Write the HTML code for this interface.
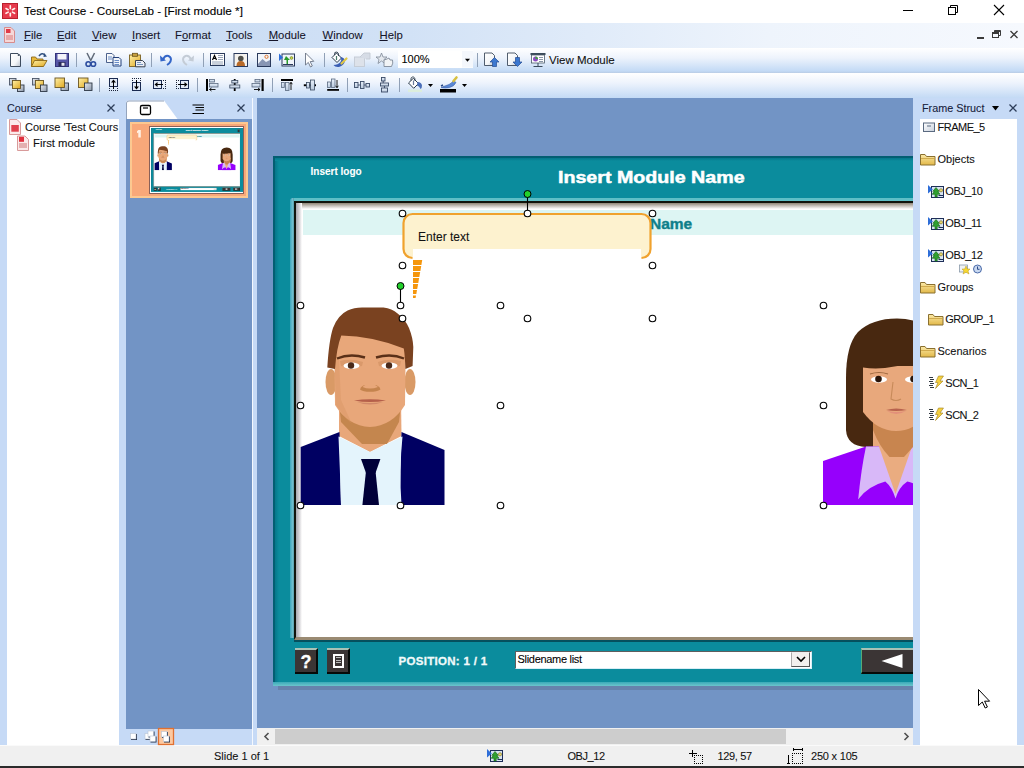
<!DOCTYPE html>
<html><head><meta charset="utf-8">
<style>
*{margin:0;padding:0;box-sizing:border-box}
html,body{width:1024px;height:768px;overflow:hidden;background:#C6DAF6;font-family:"Liberation Sans",sans-serif;font-size:12px;color:#000}
.a{position:absolute}
.t{position:absolute;white-space:nowrap;line-height:1;-webkit-text-stroke:0.08px currentColor}
u{text-decoration:underline;text-underline-offset:0.5px;text-decoration-thickness:1px}
</style></head><body>

<!-- title bar -->
<div class="a" style="left:0;top:0;width:1024px;height:23px;background:#fff"></div>
<div class="a" style="left:2px;top:3px;width:16px;height:16px;background:#E8424A"></div>
<div class="t" style="left:24px;top:5.3px;font-size:11.7px;color:#000;-webkit-text-stroke:0.12px #000">Test Course - CourseLab - [First module *]</div>

<!-- menu bar -->
<div class="a" style="left:0;top:23px;width:1024px;height:24.5px;background:linear-gradient(90deg,#C4D8F2 0%,#D2E2F6 40%,#EEF4FC 75%,#F6F9FE 100%)"></div>

<!-- toolbars -->
<div class="a" style="left:0;top:47.5px;width:1024px;height:25px;background:linear-gradient(180deg,#FFFFFF 0%,#EDF3FC 40%,#C3DAF5 92%,#B9CCE4 100%)"></div>
<div class="a" style="left:0;top:72.5px;width:1024px;height:25.5px;background:linear-gradient(180deg,#FFFFFF 0%,#EDF3FC 40%,#C3DAF5 100%)"></div>

<!-- left panel -->
<div class="t" style="left:7px;top:103.3px;font-size:10.8px;color:#15203a">Course</div>
<div class="a" style="left:7px;top:119px;width:112px;height:626px;background:#fff"></div>

<!-- thumbnail panel -->

<div class="a" style="left:126px;top:119px;width:126px;height:610px;background:#7294C5"></div>
<div class="a" style="left:252px;top:98px;width:1px;height:647px;background:#F4F8FE"></div>

<svg class="a" style="left:0;top:47px" width="620" height="51" viewBox="0 47 620 51">
<defs>
 <linearGradient id="gY" x1="0" y1="0" x2="1" y2="1"><stop offset="0" stop-color="#FFF0A8"/><stop offset="1" stop-color="#E0A820"/></linearGradient>
 <linearGradient id="gG" x1="0" y1="0" x2="1" y2="1"><stop offset="0" stop-color="#E8ECF2"/><stop offset="1" stop-color="#8A96A8"/></linearGradient>
 <linearGradient id="gDoc" x1="0" y1="0" x2="1" y2="1"><stop offset="0" stop-color="#FFFFFF"/><stop offset="0.6" stop-color="#F4F6F8"/><stop offset="1" stop-color="#B8C0CC"/></linearGradient>
 <linearGradient id="gB" x1="0" y1="0" x2="0" y2="1"><stop offset="0" stop-color="#E8F0FA"/><stop offset="1" stop-color="#B8C8DC"/></linearGradient>
</defs>
<!-- ===== toolbar 1 ===== -->
<!-- new -->
<path d="M10.5,53.5 L18,53.5 L20.5,56 L20.5,66.5 L10.5,66.5 Z" fill="url(#gDoc)" stroke="#3E4C5E" stroke-width="1"/>
<circle cx="18.6" cy="55" r="1" fill="#3E4C5E"/>
<!-- open -->
<path d="M31.5,57 L31.5,66.5 L43,66.5 L43,59 L37,59 L35.5,57 Z" fill="#E8B838" stroke="#8A6818" stroke-width="0.9"/>
<path d="M31.5,66.5 L34.5,60.5 L47,60.5 L43.5,66.5 Z" fill="url(#gY)" stroke="#8A6818" stroke-width="0.9"/>
<path d="M39,56 Q42,52 45,55" fill="none" stroke="#2E4E7E" stroke-width="1.6"/>
<path d="M44,53 L47,56.5 L43.5,57 Z" fill="#2E4E7E"/>
<!-- save -->
<rect x="55.5" y="53.5" width="13" height="13" fill="#5656A6" stroke="#34347C" stroke-width="1"/>
<rect x="57.5" y="54" width="9" height="5.5" fill="#F4F4FA"/>
<rect x="58.5" y="62" width="7" height="4.5" fill="#2A2A5A"/>
<rect x="61.5" y="62.8" width="3" height="3" fill="#E8E8F0"/>
<line x1="76.5" y1="53" x2="76.5" y2="67" stroke="#90A0B6" stroke-width="1"/>
<!-- cut -->
<path d="M87,53 L91,61 M94.5,53 L90.5,61" stroke="#606A78" stroke-width="1.5"/>
<circle cx="88.3" cy="64" r="2.3" fill="none" stroke="#2D4EA0" stroke-width="1.6"/>
<circle cx="93.3" cy="64" r="2.3" fill="none" stroke="#2D4EA0" stroke-width="1.6"/>
<!-- copy -->
<path d="M106.5,53.5 L112,53.5 L114,55.5 L114,62.5 L106.5,62.5 Z" fill="#F8FAFC" stroke="#3A5080" stroke-width="0.9"/>
<path d="M113,57.5 L119,57.5 L121,59.5 L121,66 L113,66 Z" fill="#F0F4FA" stroke="#23407A" stroke-width="1"/>
<path d="M108,57 H112 M108,59 H112 M114.5,60.5 H119 M114.5,62.5 H119 M114.5,64.5 H119" stroke="#5A80C0" stroke-width="0.9"/>
<!-- paste -->
<rect x="129.5" y="55" width="11" height="11.5" fill="url(#gY)" stroke="#7A6020" stroke-width="0.9"/>
<rect x="132.5" y="53.3" width="5" height="3" fill="#C8A040" stroke="#6A5218" stroke-width="0.8"/>
<path d="M135.5,60.5 L142.5,60.5 L145,63 L145,66.8 L135.5,66.8 Z" fill="#ECEEF4" stroke="#3A4250" stroke-width="1"/>
<path d="M137,62.5 H141 M137,64.5 H143" stroke="#5A80B0" stroke-width="0.8"/>
<line x1="151.5" y1="53" x2="151.5" y2="67" stroke="#90A0B6" stroke-width="1"/>
<!-- undo -->
<path d="M163,59.5 Q165,55 168.5,56 Q172,57.5 170.5,61.5 Q169.5,63.5 167,65" fill="none" stroke="#3466C8" stroke-width="2"/>
<path d="M160,55.5 L160.5,61.5 L166,60.5 Z" fill="#3466C8"/>
<!-- redo -->
<path d="M191,59.5 Q189,55 185.5,56 Q182,57.5 183.5,61.5 Q184.5,63.5 187,65" fill="none" stroke="#C4CCD6" stroke-width="2"/>
<path d="M194,55.5 L193.5,61.5 L188,60.5 Z" fill="#C4CCD6"/>
<line x1="203.5" y1="53" x2="203.5" y2="67" stroke="#90A0B6" stroke-width="1"/>
<!-- text box -->
<rect x="210.5" y="53.5" width="14" height="12" fill="#fff" stroke="#2A3A5C" stroke-width="1"/>
<path d="M212.5,60 L214.5,55.5 L216.5,60 M213.3,58.5 H215.7" fill="none" stroke="#000" stroke-width="1.2"/>
<path d="M218,55.5 H223 M218,57.5 H223 M218,59.5 H223 M212,62 H223 M212,64 H223" stroke="#7A8AA4" stroke-width="0.8"/>
<!-- person picture -->
<rect x="234" y="53.5" width="13.5" height="13" fill="#F4F2EE" stroke="#2A3A5C" stroke-width="1"/>
<circle cx="240.8" cy="58.5" r="2.8" fill="#50504A"/>
<path d="M236.5,66 Q236.5,61 240.8,61 Q245,61 245,66 Z" fill="#B86A28"/>
<!-- picture -->
<rect x="257.5" y="53.5" width="13" height="13" fill="#F0F4FA" stroke="#2A3A5C" stroke-width="1"/>
<path d="M258,64 L262.5,59 L266,62 L270,60 L270,66 L258,66 Z" fill="#8896B4"/>
<circle cx="266.5" cy="56.8" r="1.6" fill="none" stroke="#E07830" stroke-width="1"/>
<!-- object -->
<rect x="282" y="54" width="12.5" height="12" fill="#F0F4FA" stroke="#2A3A5C" stroke-width="1"/>
<path d="M279,53.5 L283,57.5 L279,61 Z" fill="#2E6ED8"/>
<path d="M286,56 L290,60 L288,60 L288,64 L286.5,64 L286.5,60 L284,60 Z" fill="#2A9A2A"/>
<circle cx="291.5" cy="58" r="1.4" fill="#C8D848" stroke="#6A7A20" stroke-width="0.6"/>
<path d="M283,64.5 H293" stroke="#2A3A5C" stroke-width="1"/>
<!-- pointer -->
<path d="M305.5,53 L305.5,65 L308.3,62.4 L310.5,67 L312.3,66 L310.2,61.6 L313.8,61.3 Z" fill="#fff" stroke="#6A7486" stroke-width="0.9"/>
<line x1="324.5" y1="53" x2="324.5" y2="67" stroke="#90A0B6" stroke-width="1"/>
<!-- format paint -->
<path d="M332,57.5 L336.5,53 L341.5,58 L337,62.5 Z" fill="#fff" stroke="#2A3A4A" stroke-width="1"/>
<path d="M334.5,55 Q334,51.5 337,52 Q339,52.5 338.5,56" fill="none" stroke="#2A3A4A" stroke-width="0.9"/>
<path d="M336.5,56 V60" stroke="#4A7A6A" stroke-width="1.2"/>
<path d="M340.5,57 Q344.5,57.5 345,61 Q344,65.5 339,67 Q335,67.5 333.5,65 Q338,65 340.5,62 Q342,60 340.5,57 Z" fill="#3A5EB4"/>
<path d="M341.5,63.5 L346.5,58.5" stroke="#E0C848" stroke-width="2.2" stroke-linecap="round"/>
<!-- disabled icon -->
<rect x="354.5" y="57" width="10" height="9.5" fill="#DDE2EA" stroke="#C4CAD4" stroke-width="0.9"/>
<path d="M360,57 L364,53 L370,53 L370,59 L366,59" fill="#D6DCE6" stroke="#C4CAD4" stroke-width="0.9"/>
<!-- star hand -->
<path d="M381.5,53 L383,57 L387,57 L384,59.5 L385,63.5 L381.5,61 L378,63.5 L379,59.5 L376,57 L380,57 Z" fill="#E4E8EE" stroke="#808A98" stroke-width="0.8"/>
<path d="M384,60 L384,66.5 L391.5,66.5 Q393.5,63 392.5,60 L390,60 L389,58 L387,59 Z" fill="#F2F4F6" stroke="#808A98" stroke-width="0.9"/>
<!-- combo -->
<rect x="398" y="50.5" width="75" height="17.5" fill="#fff"/>
<rect x="462" y="51" width="11" height="16.5" fill="#F4F7FC"/>
<path d="M465,58.7 L470,58.7 L467.5,61.7 Z" fill="#000"/>
<line x1="477.5" y1="53" x2="477.5" y2="67" stroke="#90A0B6" stroke-width="1"/>
<!-- up -->
<path d="M484.5,53 L492,53 L494.5,55.5 L494.5,65.5 L484.5,65.5 Z" fill="url(#gDoc)" stroke="#3E4C5E" stroke-width="0.9"/>
<path d="M494.5,57.5 L499,62 L496.5,62 L496.5,66.5 L492.5,66.5 L492.5,62 L490,62 Z" fill="#3C78D0" stroke="#244C94" stroke-width="0.7"/>
<!-- down -->
<path d="M507.5,53 L515,53 L517.5,55.5 L517.5,65.5 L507.5,65.5 Z" fill="url(#gDoc)" stroke="#3E4C5E" stroke-width="0.9"/>
<path d="M515.5,57.5 L519.5,57.5 L519.5,62 L522,62 L517.5,66.5 L513,62 L515.5,62 Z" fill="#3C78D0" stroke="#244C94" stroke-width="0.7"/>
<!-- view module -->
<rect x="530.5" y="53" width="15" height="2" fill="#3A4A5A"/>
<rect x="531.5" y="55" width="13" height="8" fill="#fff" stroke="#4A5A6A" stroke-width="0.8"/>
<circle cx="535.5" cy="59" r="2.5" fill="#8A4AC0"/>
<path d="M535.5,59 L535.5,56.5 A2.5,2.5 0 0 1 538,59 Z" fill="#40A040"/>
<path d="M539,57.5 H543 M539,59.5 H543 M539,61.5 H543" stroke="#6A7A90" stroke-width="0.8"/>
<path d="M538,63 V66.5 M533.5,66.5 H542.5" stroke="#3A4A5A" stroke-width="1"/>

<!-- ===== toolbar 2 ===== -->
<!-- bring to front -->
<rect x="9.5" y="78.5" width="6.5" height="6.5" fill="url(#gG)" stroke="#4A5466" stroke-width="0.9"/>
<rect x="17.5" y="85" width="6.5" height="6.5" fill="url(#gG)" stroke="#2E3846" stroke-width="0.9"/>
<rect x="12.5" y="80.5" width="8" height="8" fill="url(#gY)" stroke="#6A5420" stroke-width="0.9"/>
<!-- bring forward -->
<rect x="32.5" y="78.5" width="6.5" height="6.5" fill="url(#gG)" stroke="#4A5466" stroke-width="0.9"/>
<rect x="35.5" y="80.5" width="8" height="8" fill="url(#gY)" stroke="#6A5420" stroke-width="0.9"/>
<rect x="40.5" y="85" width="6.5" height="6.5" fill="url(#gG)" stroke="#2E3846" stroke-width="0.9"/>
<!-- send backward -->
<rect x="61" y="83" width="7.5" height="7.5" fill="url(#gG)" stroke="#2E3846" stroke-width="0.9"/>
<rect x="55" y="78" width="9.5" height="9.5" fill="url(#gY)" stroke="#6A5420" stroke-width="0.9"/>
<!-- send to back -->
<rect x="78.5" y="78" width="9.5" height="9.5" fill="url(#gY)" stroke="#6A5420" stroke-width="0.9"/>
<rect x="84.5" y="83" width="7.5" height="7.5" fill="url(#gG)" stroke="#2E3846" stroke-width="0.9"/>
<line x1="99.5" y1="78" x2="99.5" y2="92" stroke="#90A0B6" stroke-width="1"/>
<!-- move up/down/left/right -->
<g stroke="#1A2A50" stroke-width="1">
<rect x="109.5" y="78.5" width="8" height="8" fill="#E4ECF8"/>
<rect x="132.5" y="82.5" width="8" height="8" fill="#E4ECF8"/>
<rect x="153.5" y="80.5" width="8" height="8" fill="#E4ECF8"/>
<rect x="180.5" y="80.5" width="8" height="8" fill="#E4ECF8"/>
</g>
<g fill="#1A2238">
<rect x="109" y="90" width="1" height="1"/><rect x="111" y="90" width="1" height="1"/><rect x="113" y="90" width="1" height="1"/><rect x="115" y="90" width="1" height="1"/><rect x="117" y="90" width="1" height="1"/>
<rect x="109" y="88" width="1" height="1"/><rect x="117" y="88" width="1" height="1"/>
<rect x="132" y="78" width="1" height="1"/><rect x="134" y="78" width="1" height="1"/><rect x="136" y="78" width="1" height="1"/><rect x="138" y="78" width="1" height="1"/><rect x="140" y="78" width="1" height="1"/>
<rect x="132" y="80" width="1" height="1"/><rect x="140" y="80" width="1" height="1"/>
<rect x="165" y="80" width="1" height="1"/><rect x="165" y="82" width="1" height="1"/><rect x="165" y="84" width="1" height="1"/><rect x="165" y="86" width="1" height="1"/><rect x="165" y="88" width="1" height="1"/>
<rect x="163" y="80" width="1" height="1"/><rect x="163" y="88" width="1" height="1"/>
<rect x="176" y="80" width="1" height="1"/><rect x="176" y="82" width="1" height="1"/><rect x="176" y="84" width="1" height="1"/><rect x="176" y="86" width="1" height="1"/><rect x="176" y="88" width="1" height="1"/>
<rect x="178" y="80" width="1" height="1"/><rect x="178" y="88" width="1" height="1"/>
</g>
<g fill="#000">
<path d="M113.5,79.5 L116,82.5 L114,82.5 L114,89 L113,89 L113,82.5 L111,82.5 Z"/>
<path d="M136.5,89.5 L139,86.5 L137,86.5 L137,80 L136,80 L136,86.5 L134,86.5 Z"/>
<path d="M154.5,84.5 L157.5,82 L157.5,84 L163,84 L163,85 L157.5,85 L157.5,87 Z"/>
<path d="M187.5,84.5 L184.5,82 L184.5,84 L178,84 L178,85 L184.5,85 L184.5,87 Z"/>
</g>
<line x1="197.5" y1="78" x2="197.5" y2="92" stroke="#90A0B6" stroke-width="1"/>
<!-- align left/center/right -->
<rect x="206" y="79" width="2" height="12" fill="#000"/>
<rect x="209.5" y="79.5" width="5" height="2.5" fill="url(#gB)" stroke="#5A6A80" stroke-width="0.8"/>
<rect x="209.5" y="83.5" width="8.5" height="3.5" fill="url(#gB)" stroke="#5A6A80" stroke-width="0.8"/>
<path d="M209.5,89.5 H215.5 M209.5,89.5 L211.5,88 M209.5,89.5 L211.5,91" stroke="#000" stroke-width="0.9" fill="none"/>
<rect x="233.8" y="79" width="1.8" height="12" fill="#000"/>
<rect x="231.8" y="80.5" width="6" height="2.5" fill="url(#gB)" stroke="#3A4A60" stroke-width="0.8"/>
<rect x="229.8" y="85" width="10" height="3" fill="url(#gB)" stroke="#3A4A60" stroke-width="0.8"/>
<rect x="261.5" y="79" width="2.2" height="12" fill="#000"/>
<rect x="255" y="79.5" width="5" height="2.5" fill="url(#gB)" stroke="#5A6A80" stroke-width="0.8"/>
<rect x="252" y="83.5" width="8" height="3.5" fill="url(#gB)" stroke="#5A6A80" stroke-width="0.8"/>
<path d="M254,89.5 H260 M260,89.5 L258,88 M260,89.5 L258,91" stroke="#000" stroke-width="0.9" fill="none"/>
<line x1="272.5" y1="78" x2="272.5" y2="92" stroke="#90A0B6" stroke-width="1"/>
<!-- align top/middle/bottom -->
<rect x="281" y="79" width="12" height="2" fill="#000"/>
<rect x="281.5" y="82.5" width="2.8" height="5" fill="url(#gB)" stroke="#5A6A80" stroke-width="0.8"/>
<rect x="285.5" y="82.5" width="3.5" height="8" fill="url(#gB)" stroke="#5A6A80" stroke-width="0.8"/>
<path d="M291,90 V82.5 M291,82.3 L289.7,84.2 M291,82.3 L292.3,84.2" stroke="#000" stroke-width="0.9" fill="none"/>
<rect x="303.8" y="84.3" width="12.2" height="1.9" fill="#000"/>
<rect x="306.5" y="82.5" width="3" height="5.5" fill="url(#gB)" stroke="#3A4A60" stroke-width="0.8"/>
<rect x="310.5" y="80" width="4" height="10" fill="url(#gB)" stroke="#3A4A60" stroke-width="0.8"/>
<rect x="327.2" y="89" width="11.8" height="1.8" fill="#000"/>
<rect x="327.5" y="82" width="3" height="5.5" fill="url(#gB)" stroke="#5A6A80" stroke-width="0.8"/>
<rect x="331.5" y="79" width="3.5" height="8.5" fill="url(#gB)" stroke="#5A6A80" stroke-width="0.8"/>
<path d="M337,80 V87.5 M337,87.7 L335.7,85.8 M337,87.7 L338.3,85.8" stroke="#000" stroke-width="0.9" fill="none"/>
<line x1="347.5" y1="78" x2="347.5" y2="92" stroke="#90A0B6" stroke-width="1"/>
<!-- distribute -->
<rect x="354.5" y="82.5" width="3.5" height="5" fill="url(#gB)" stroke="#3A4A66" stroke-width="0.9"/>
<rect x="360.5" y="81.5" width="3.5" height="7" fill="url(#gB)" stroke="#3A4A66" stroke-width="0.9"/>
<rect x="366" y="83.5" width="3.5" height="3.5" fill="url(#gB)" stroke="#3A4A66" stroke-width="0.9"/>
<path d="M358,85 H360.5 M364,85 H366" stroke="#3A4A66" stroke-width="0.9"/>
<rect x="381.5" y="77.5" width="3.5" height="3.5" fill="url(#gB)" stroke="#3A4A66" stroke-width="0.9"/>
<rect x="380.5" y="83" width="8" height="3" fill="url(#gB)" stroke="#3A4A66" stroke-width="0.9"/>
<rect x="381.5" y="88" width="6" height="4" fill="url(#gB)" stroke="#3A4A66" stroke-width="0.9"/>
<path d="M383.2,81 V83 M384.5,86 V88" stroke="#3A4A66" stroke-width="0.9"/>
<line x1="399.5" y1="78" x2="399.5" y2="92" stroke="#90A0B6" stroke-width="1"/>
<!-- fill -->
<path d="M408.5,83 L413.3,78.3 L418.5,83.5 L413.7,88.3 Z" fill="#fff" stroke="#2A3A4A" stroke-width="1"/>
<path d="M411,80.5 Q410.5,76.5 413.5,77 Q415.5,77.5 415,81" fill="none" stroke="#2A3A4A" stroke-width="0.9"/>
<path d="M413.5,80.5 V85" stroke="#6A7A9A" stroke-width="1.2"/>
<path d="M417.5,82 Q421.5,82 422,85.5 Q422,88.5 420.5,89 Q419.5,86 417,85.5 Z" fill="#4A6EB8"/>
<rect x="408" y="89.5" width="14" height="2.5" fill="#DCEEDC"/>
<path d="M428,84 L433,84 L430.5,87 Z" fill="#000"/>
<!-- line color -->
<path d="M441,87.5 Q446,85.5 449,84.5 Q452,83 453.5,80.5 L456,82.5 Q454,86.5 449.5,87.5 Q445,88.5 441,87.5 Z" fill="#5A88D4" stroke="#3A5EA8" stroke-width="0.6"/>
<path d="M441,86 L443,85" stroke="#2A4A88" stroke-width="1.5"/>
<path d="M453.5,81 L456.5,77.5" stroke="#D8C040" stroke-width="2.6" stroke-linecap="round"/>
<rect x="440" y="89" width="16" height="3.5" fill="#000"/>
<path d="M462,84 L467,84 L464.5,87 Z" fill="#000"/>
</svg>
<!-- main canvas -->
<div class="a" style="left:257px;top:98px;width:656px;height:630px;background:#7294C5;overflow:hidden">
<div class="a" style="left:-257px;top:-98px;width:1024px;height:768px">
 <div class="a" style="left:278px;top:161px;width:760px;height:529px;background:#6682AC"></div>
 <!-- teal frame -->
 <div class="a" style="left:273px;top:156px;width:760px;height:530px;background:#0B8C9D;border-top:2px solid #035E72;border-left:2px solid #035E72"></div>
 <div class="a" style="left:275px;top:158px;width:4px;height:526px;background:linear-gradient(90deg,#06768A,#0B8C9D)"></div>
 <div class="a" style="left:275px;top:158px;width:758px;height:3px;background:linear-gradient(180deg,#06768A,#0B8C9D)"></div>
 <div class="a" style="left:273px;top:682px;width:760px;height:4px;background:linear-gradient(180deg,#3AAAB8,#6CC4CC)"></div>
 <div class="t" style="left:310.5px;top:166.5px;font-size:10px;font-weight:bold;color:#fff">Insert logo</div>
 <div class="t" style="left:558px;top:169px;font-size:17px;font-weight:bold;color:#fff;-webkit-text-stroke:0.5px #fff;transform:scaleX(1.155);transform-origin:0 0">Insert Module Name</div>
 <!-- inner frame -->
 <div class="a" style="left:291px;top:198px;width:718px;height:3px;background:#5EBFC6;border-radius:3px 0 0 0"></div>
 <div class="a" style="left:289.5px;top:198px;width:4.5px;height:440px;background:linear-gradient(90deg,#3AA6BC,#7CC2D2 80%,#2E7A80);border-radius:3px 0 0 0"></div>
 <div class="a" style="left:294px;top:201px;width:712px;height:439px;background:#fff;border-top:2px solid #10140C;border-left:2px solid #10140C;border-bottom:3px solid #9A8A72"></div>
 <div class="a" style="left:296px;top:203px;width:710px;height:6px;background:linear-gradient(180deg,#8E8676,#C8C4BE 50%,#fff)"></div>
 <div class="a" style="left:296px;top:203px;width:6px;height:434px;background:linear-gradient(90deg,#A6A6AE,#D0CED2 50%,#fff)"></div>
 <div class="a" style="left:294px;top:640px;width:712px;height:2px;background:#05505E"></div>
 <!-- header band -->
 <div class="a" style="left:303px;top:210px;width:700px;height:25px;background:#DDF5F3"></div>
 <div class="t" style="left:650px;top:216px;font-size:15.5px;font-weight:bold;color:#0F7F8A;-webkit-text-stroke:0.4px #0F7F8A">Name</div>

 <!-- callout -->
 <svg class="a" style="left:395px;top:205px" width="265" height="60" viewBox="395 205 265 60">
  <path d="M412.5,258 A9,9 0 0 1 403.5,249 L403.5,223 A9,9 0 0 1 412.5,214 L641.5,214 A9,9 0 0 1 650.5,223 L650.5,249 A9,9 0 0 1 641.5,258 Z" fill="#FDF2CF"/>
  <rect x="413" y="249" width="228" height="20" fill="#fff"/>
  <path d="M412.5,258 A9,9 0 0 1 403.5,249 L403.5,223 A9,9 0 0 1 412.5,214 L641.5,214 A9,9 0 0 1 650.5,223 L650.5,249 A9,9 0 0 1 641.5,258" fill="none" stroke="#F0A22E" stroke-width="2.2"/>
 </svg>
 <div class="a" style="left:413px;top:264px;width:228px;height:54px;background:#fff"></div>
 <div class="t" style="left:418px;top:230.5px;font-size:12px;color:#111">Enter text</div>
 <svg class="a" style="left:400px;top:255px" width="30" height="50" viewBox="400 255 30 50">
  <g fill="#F5960C">
   <polygon points="413,260 422.2,260 421.4,265 413,265"/>
   <polygon points="413,266 421.2,266 420.4,271 413,271"/>
   <polygon points="413,272 420.2,272 419.3,277 413,277"/>
   <polygon points="413,278 419.1,278 418.3,283 413,283"/>
   <polygon points="413,284 418.1,284 417.2,289 413,289"/>
   <polygon points="413,290 417,290 416.3,294 413,294"/>
   <polygon points="413,295.5 416,295.5 415.6,298 413,298"/>
  </g>
 </svg>

 <!-- bottom bar -->
 <div class="a" style="left:295px;top:647.5px;width:23px;height:26px;background:#3B3535;border-top:2px solid #A9C2B6;border-bottom:2px solid #060A08;border-right:2px solid #060A08"></div>
 <div class="t" style="left:300.5px;top:652.5px;font-size:18px;font-weight:bold;color:#fff;-webkit-text-stroke:0.3px #fff">?</div>
 <div class="a" style="left:327px;top:647.5px;width:23px;height:26px;background:#3B3535;border-top:2px solid #A9C2B6;border-bottom:2px solid #060A08;border-right:2px solid #060A08"></div>
 <div class="a" style="left:332.5px;top:653.5px;width:11.5px;height:14.5px;border:2px solid #fff;background:#3B3535"></div>
 <div class="a" style="left:335.5px;top:657px;width:5.5px;height:1.3px;background:#bbb"></div>
 <div class="a" style="left:335.5px;top:659.5px;width:5.5px;height:1.3px;background:#bbb"></div>
 <div class="a" style="left:335.5px;top:662px;width:5.5px;height:1.3px;background:#bbb"></div>
 <div class="t" style="left:398.5px;top:655.5px;font-size:11.5px;font-weight:bold;color:#F0FAFA;letter-spacing:0.3px;-webkit-text-stroke:0.3px #F0FAFA">POSITION: 1 / 1</div>
 <div class="a" style="left:514.5px;top:650.5px;width:297.5px;height:18.5px;background:#fff;border-top:1px solid #5E5E5E;border-left:1px solid #5E5E5E;border-bottom:1px solid #D8EEF6;border-right:1px solid #D8EEF6"></div>
 <div class="t" style="left:517.5px;top:654.3px;font-size:11px;color:#000;letter-spacing:-0.3px">Slidename list</div>
 <div class="a" style="left:791px;top:651.5px;width:19px;height:15.5px;background:#F2F0EE;border-right:1px solid #555;border-bottom:1px solid #555;border-left:1px solid #aaa;border-top:1px solid #eee"></div>
 <svg class="a" style="left:795px;top:655px" width="12" height="9" viewBox="0 0 12 9"><path d="M2,2 L6,6 L10,2" fill="none" stroke="#000" stroke-width="1.6"/></svg>
 <div class="a" style="left:861px;top:647.5px;width:66px;height:26px;background:#3B3535;border-top:2px solid #A9C2B6;border-bottom:2px solid #060A08;border-left:1px solid #5a7"></div>
 <svg class="a" style="left:878px;top:652px" width="28" height="20" viewBox="878 652 28 20"><polygon points="881.5,661 902.5,654 902.5,668" fill="#fff"/></svg>

 <!-- man -->
 <svg class="a" style="left:300px;top:305px" width="200" height="200" viewBox="300 305 200 200">
  <path d="M339,398 L401,398 L401.5,436 L370,452 L339,436 Z" fill="#E8A77A"/>
  <path d="M339,404 L401,404 L399,422 L387,444 L362,444 L341,422 Z" fill="#C4864E"/>
  <path d="M300.7,447 L339.5,432 L341,505 L300.7,505 Z" fill="#000062"/>
  <path d="M401.5,432 L444.5,450 L444.5,505 L399.5,505 Z" fill="#000062"/>
  <path d="M338.5,436.5 L370,452 L402.5,436.5 Q399,470 401.5,505 L341,505 Q340,470 338.5,436.5 Z" fill="#E4F4FC"/>
  <path d="M361,459 L380.4,459 L375.5,473 L366,473 Z" fill="#000038"/>
  <path d="M366,471 L375.5,471 L379,505 L362.4,505 Z" fill="#000038"/>
  <ellipse cx="331" cy="382" rx="5.5" ry="13" fill="#D99A66"/>
  <ellipse cx="410" cy="382" rx="5.5" ry="13" fill="#D99A66"/>
  <path d="M334,328 L406,328 L405,405 Q392,426 370,427 Q348,426 335,405 Z" fill="#E8A77A"/>
  <path d="M334,350 L336,405 Q346,420 352,424 L341,400 L339,360 Z" fill="#D4925E" opacity="0.35"/>
  <path d="M327.3,367.5 Q329,340 333,328 Q338,315 347.6,310.5 Q354,307.5 362,307.5 L383.5,307.5 Q392,308.5 397.6,313.5 Q405,319 409,328 Q413,338 413.3,347 L412.6,366 L405.4,369 Q405,356 403.8,348.4 Q372,336 341.3,335.5 Q336.5,348 335,369 Z" fill="#7A4220"/>
  <path d="M337,358.5 Q350,353 365,357.5" fill="none" stroke="#5A3018" stroke-width="2.4"/>
  <path d="M376,357.5 Q391,353 404,358.5" fill="none" stroke="#5A3018" stroke-width="2.4"/>
  <path d="M340,361 Q351,358 363,362 L362,366 Q351,368 341,366 Z" fill="#D09060" opacity="0.6"/>
  <path d="M378,362 Q389,358 401,361 L400,366 Q390,368 379,366 Z" fill="#D09060" opacity="0.6"/>
  <ellipse cx="351.5" cy="365.8" rx="8" ry="3.2" fill="#fff"/>
  <ellipse cx="389.5" cy="365.8" rx="8" ry="3.2" fill="#fff"/>
  <circle cx="351" cy="365.5" r="3.2" fill="#4A2A1A"/>
  <circle cx="389" cy="365.5" r="3.2" fill="#4A2A1A"/>
  <path d="M360,389.5 Q361.5,385 366,385 L374.5,385 Q379,385 380.5,389.5 Q377,391.8 370,391.8 Q363,391.8 360,389.5 Z" fill="#C4844E"/>
  <path d="M362.5,387 Q365,384 370,384 Q375,384 378,387 Q374,388.5 370,388.5 Q366,388.5 362.5,387 Z" fill="#E8A77A"/>
  <path d="M354,400.5 Q370,398 386,400.5 Q370,403.5 354,400.5 Z" fill="#B5604A"/>
  <path d="M357,402 Q370,407 383,402 Q370,404 357,402 Z" fill="#D08A6A"/>
 </svg>
 <!-- woman -->
 <svg class="a" style="left:823px;top:305px" width="200" height="200" viewBox="823 305 200 200">
  <path d="M846,378 Q846,345 858,332 Q872,318.5 897,318.5 Q922,319 934,332 Q946,345 946,378 L946,430 Q944,446 928,447 L866,447 Q847,446 846,430 Z" fill="#482810"/>
  <path d="M873,400 L926,400 L926,447 L873,447 Z" fill="#E8A87C"/>
  <path d="M823,461 L866,446.5 L926,446.5 L969,461 L969,505 L823,505 Z" fill="#9600FC"/>
  <path d="M866,446.5 L926,446.5 L933.5,499.3 L858.2,499.3 Q861,470 866,446.5 Z" fill="#D8B8F8"/>
  <path d="M876,438 L915,438 L895.5,494 Z" fill="#EAAC80"/>
  <path d="M873,405 L930,405 L930,428 Q914,446 904,457 L889.5,457 Q879,446 873,430 Z" fill="#C8854F"/>
  <path d="M863,366 L929,366 L929,412 Q915,431 896,431 Q877,431 863,412 Z" fill="#E8A87C"/>
  <path d="M863,367.5 Q873,369 885,368 Q900,366 913,362 L929,358 L929,350 L863,350 Z" fill="#482810"/>
  <path d="M858.2,499.3 Q868,486 885.3,481.5 Q892,487 895.5,498.5 Q899,487 907.3,481.5 Q924,486 933.5,499.3 L933.5,505 L858.2,505 Z" fill="#9600FC"/>
  <ellipse cx="879" cy="379.5" rx="8" ry="3.3" fill="#fff"/>
  <circle cx="878.5" cy="379" r="3.3" fill="#2A1408"/>
  <ellipse cx="913" cy="379.5" rx="8" ry="3.3" fill="#fff"/>
  <circle cx="913.5" cy="379" r="3.3" fill="#2A1408"/>
  <path d="M870,374 Q879,371 888,374" fill="none" stroke="#A06a40" stroke-width="1.2"/>
  <path d="M893,382 L891,399 Q896,402 901,399" fill="none" stroke="#C78A5A" stroke-width="1.1"/>
  <path d="M886,410 Q896,407 907,410 Q896,412 886,410 Z" fill="#B8624E"/>
  <path d="M887,411 Q896,417 906,411 Q896,413 887,411 Z" fill="#E2907A"/>
 </svg>
 <div class="a" style="left:951px;top:647.5px;width:55px;height:26px;background:#3B3535;border-top:2px solid #A9C2B6;border-bottom:2px solid #060A08;border-right:2px solid #060A08"></div>
 <svg class="a" style="left:965px;top:652px" width="28" height="20" viewBox="965 652 28 20"><polygon points="989,661 968,654 968,668" fill="#fff"/></svg>
 <div class="a" style="left:987px;top:167px;width:16px;height:24px;background:#2E3636;border-top:2px solid #A9C2B6"></div>

 <!-- selection handles -->
 <svg class="a" style="left:0;top:0" width="1024" height="768" viewBox="0 0 1024 768">
  <g stroke="#000" stroke-width="1.1">
   <line x1="527.5" y1="194" x2="527.5" y2="213.5"/>
   <line x1="400.5" y1="286" x2="400.5" y2="305.5"/>
  </g>
  <g fill="#fff" stroke="#000" stroke-width="1.1">
   <circle cx="402.5" cy="213.5" r="3.3"/><circle cx="527.5" cy="213.5" r="3.3"/><circle cx="652.5" cy="213.5" r="3.3"/>
   <circle cx="402.5" cy="265.5" r="3.3"/><circle cx="652.5" cy="265.5" r="3.3"/>
   <circle cx="402.5" cy="318.5" r="3.3"/><circle cx="527.5" cy="318.5" r="3.3"/><circle cx="652.5" cy="318.5" r="3.3"/>
   <circle cx="300.5" cy="305.5" r="3.3"/><circle cx="400.5" cy="305.5" r="3.3"/><circle cx="500.5" cy="305.5" r="3.3"/>
   <circle cx="300.5" cy="405.5" r="3.3"/><circle cx="500.5" cy="405.5" r="3.3"/>
   <circle cx="300.5" cy="505.5" r="3.3"/><circle cx="400.5" cy="505.5" r="3.3"/><circle cx="500.5" cy="505.5" r="3.3"/>
   <circle cx="823.5" cy="305.5" r="3.3"/><circle cx="823.5" cy="405.5" r="3.3"/><circle cx="823.5" cy="505.5" r="3.3"/>
  </g>
  <g fill="#22D02A" stroke="#000" stroke-width="1">
   <circle cx="527.5" cy="194" r="3.5"/><circle cx="400.5" cy="286" r="3.5"/>
  </g>
 </svg>

</div></div>
<!-- thumbnail -->
<div class="a" style="left:130px;top:122px;width:118px;height:76px;background:#F8A87A;border:2px solid #FCC890"></div>
<svg class="a" style="left:134px;top:128px" width="10" height="12" viewBox="134 128 10 12"><path d="M138.3,130 L140.8,130 L140.8,137.5 L138.3,137.5 L138.3,132.6 L137,133.2 L137,131.2 Z" fill="#FFF0E4"/></svg>
<div class="a" style="left:149px;top:126px;width:95px;height:68px;background:#fff;border:1px solid #8A6058"></div>
<div class="a" style="left:151px;top:128px;width:92px;height:64px;overflow:hidden">
<div class="a" style="left:-32.99px;top:-18.81px;width:1024px;height:768px;transform:scale(0.12121);transform-origin:0 0">
 <!-- teal frame -->
 <div class="a" style="left:273px;top:156px;width:760px;height:530px;background:#0B8C9D;border-top:2px solid #035E72;border-left:2px solid #035E72"></div>
 <div class="a" style="left:275px;top:158px;width:4px;height:526px;background:linear-gradient(90deg,#06768A,#0B8C9D)"></div>
 <div class="a" style="left:275px;top:158px;width:758px;height:3px;background:linear-gradient(180deg,#06768A,#0B8C9D)"></div>
 <div class="a" style="left:273px;top:682px;width:760px;height:4px;background:linear-gradient(180deg,#3AAAB8,#6CC4CC)"></div>
 <div class="t" style="left:310.5px;top:166.5px;font-size:10px;font-weight:bold;color:#fff">Insert logo</div>
 <div class="t" style="left:558px;top:169px;font-size:17px;font-weight:bold;color:#fff;-webkit-text-stroke:0.5px #fff;transform:scaleX(1.155);transform-origin:0 0">Insert Module Name</div>
 <!-- inner frame -->
 <div class="a" style="left:291px;top:198px;width:718px;height:3px;background:#5EBFC6;border-radius:3px 0 0 0"></div>
 <div class="a" style="left:289.5px;top:198px;width:4.5px;height:440px;background:linear-gradient(90deg,#3AA6BC,#7CC2D2 80%,#2E7A80);border-radius:3px 0 0 0"></div>
 <div class="a" style="left:294px;top:201px;width:712px;height:439px;background:#fff;border-top:2px solid #10140C;border-left:2px solid #10140C;border-bottom:3px solid #9A8A72"></div>
 <div class="a" style="left:296px;top:203px;width:710px;height:6px;background:linear-gradient(180deg,#8E8676,#C8C4BE 50%,#fff)"></div>
 <div class="a" style="left:296px;top:203px;width:6px;height:434px;background:linear-gradient(90deg,#A6A6AE,#D0CED2 50%,#fff)"></div>
 <div class="a" style="left:294px;top:640px;width:712px;height:2px;background:#05505E"></div>
 <!-- header band -->
 <div class="a" style="left:303px;top:210px;width:700px;height:25px;background:#DDF5F3"></div>
 <div class="t" style="left:650px;top:216px;font-size:15.5px;font-weight:bold;color:#0F7F8A;-webkit-text-stroke:0.4px #0F7F8A">Name</div>

 <!-- callout -->
 <svg class="a" style="left:395px;top:205px" width="265" height="60" viewBox="395 205 265 60">
  <path d="M412.5,258 A9,9 0 0 1 403.5,249 L403.5,223 A9,9 0 0 1 412.5,214 L641.5,214 A9,9 0 0 1 650.5,223 L650.5,249 A9,9 0 0 1 641.5,258 Z" fill="#FDF2CF"/>
  <rect x="413" y="249" width="228" height="20" fill="#fff"/>
  <path d="M412.5,258 A9,9 0 0 1 403.5,249 L403.5,223 A9,9 0 0 1 412.5,214 L641.5,214 A9,9 0 0 1 650.5,223 L650.5,249 A9,9 0 0 1 641.5,258" fill="none" stroke="#F0A22E" stroke-width="2.2"/>
 </svg>
 <div class="a" style="left:413px;top:264px;width:228px;height:54px;background:#fff"></div>
 <div class="t" style="left:418px;top:230.5px;font-size:12px;color:#111">Enter text</div>
 <svg class="a" style="left:400px;top:255px" width="30" height="50" viewBox="400 255 30 50">
  <g fill="#F5960C">
   <polygon points="413,260 422.2,260 421.4,265 413,265"/>
   <polygon points="413,266 421.2,266 420.4,271 413,271"/>
   <polygon points="413,272 420.2,272 419.3,277 413,277"/>
   <polygon points="413,278 419.1,278 418.3,283 413,283"/>
   <polygon points="413,284 418.1,284 417.2,289 413,289"/>
   <polygon points="413,290 417,290 416.3,294 413,294"/>
   <polygon points="413,295.5 416,295.5 415.6,298 413,298"/>
  </g>
 </svg>

 <!-- bottom bar -->
 <div class="a" style="left:295px;top:647.5px;width:23px;height:26px;background:#3B3535;border-top:2px solid #A9C2B6;border-bottom:2px solid #060A08;border-right:2px solid #060A08"></div>
 <div class="t" style="left:300.5px;top:652.5px;font-size:18px;font-weight:bold;color:#fff;-webkit-text-stroke:0.3px #fff">?</div>
 <div class="a" style="left:327px;top:647.5px;width:23px;height:26px;background:#3B3535;border-top:2px solid #A9C2B6;border-bottom:2px solid #060A08;border-right:2px solid #060A08"></div>
 <div class="a" style="left:332.5px;top:653.5px;width:11.5px;height:14.5px;border:2px solid #fff;background:#3B3535"></div>
 <div class="a" style="left:335.5px;top:657px;width:5.5px;height:1.3px;background:#bbb"></div>
 <div class="a" style="left:335.5px;top:659.5px;width:5.5px;height:1.3px;background:#bbb"></div>
 <div class="a" style="left:335.5px;top:662px;width:5.5px;height:1.3px;background:#bbb"></div>
 <div class="t" style="left:398.5px;top:655.5px;font-size:11.5px;font-weight:bold;color:#F0FAFA;letter-spacing:0.3px;-webkit-text-stroke:0.3px #F0FAFA">POSITION: 1 / 1</div>
 <div class="a" style="left:514.5px;top:650.5px;width:297.5px;height:18.5px;background:#fff;border-top:1px solid #5E5E5E;border-left:1px solid #5E5E5E;border-bottom:1px solid #D8EEF6;border-right:1px solid #D8EEF6"></div>
 <div class="t" style="left:517.5px;top:654.3px;font-size:11px;color:#000;letter-spacing:-0.3px">Slidename list</div>
 <div class="a" style="left:791px;top:651.5px;width:19px;height:15.5px;background:#F2F0EE;border-right:1px solid #555;border-bottom:1px solid #555;border-left:1px solid #aaa;border-top:1px solid #eee"></div>
 <svg class="a" style="left:795px;top:655px" width="12" height="9" viewBox="0 0 12 9"><path d="M2,2 L6,6 L10,2" fill="none" stroke="#000" stroke-width="1.6"/></svg>
 <div class="a" style="left:861px;top:647.5px;width:66px;height:26px;background:#3B3535;border-top:2px solid #A9C2B6;border-bottom:2px solid #060A08;border-left:1px solid #5a7"></div>
 <svg class="a" style="left:878px;top:652px" width="28" height="20" viewBox="878 652 28 20"><polygon points="881.5,661 902.5,654 902.5,668" fill="#fff"/></svg>

 <!-- man -->
 <svg class="a" style="left:300px;top:305px" width="200" height="200" viewBox="300 305 200 200">
  <path d="M339,398 L401,398 L401.5,436 L370,452 L339,436 Z" fill="#E8A77A"/>
  <path d="M339,404 L401,404 L399,422 L387,444 L362,444 L341,422 Z" fill="#C4864E"/>
  <path d="M300.7,447 L339.5,432 L341,505 L300.7,505 Z" fill="#000062"/>
  <path d="M401.5,432 L444.5,450 L444.5,505 L399.5,505 Z" fill="#000062"/>
  <path d="M338.5,436.5 L370,452 L402.5,436.5 Q399,470 401.5,505 L341,505 Q340,470 338.5,436.5 Z" fill="#E4F4FC"/>
  <path d="M361,459 L380.4,459 L375.5,473 L366,473 Z" fill="#000038"/>
  <path d="M366,471 L375.5,471 L379,505 L362.4,505 Z" fill="#000038"/>
  <ellipse cx="331" cy="382" rx="5.5" ry="13" fill="#D99A66"/>
  <ellipse cx="410" cy="382" rx="5.5" ry="13" fill="#D99A66"/>
  <path d="M334,328 L406,328 L405,405 Q392,426 370,427 Q348,426 335,405 Z" fill="#E8A77A"/>
  <path d="M334,350 L336,405 Q346,420 352,424 L341,400 L339,360 Z" fill="#D4925E" opacity="0.35"/>
  <path d="M327.3,367.5 Q329,340 333,328 Q338,315 347.6,310.5 Q354,307.5 362,307.5 L383.5,307.5 Q392,308.5 397.6,313.5 Q405,319 409,328 Q413,338 413.3,347 L412.6,366 L405.4,369 Q405,356 403.8,348.4 Q372,336 341.3,335.5 Q336.5,348 335,369 Z" fill="#7A4220"/>
  <path d="M337,358.5 Q350,353 365,357.5" fill="none" stroke="#5A3018" stroke-width="2.4"/>
  <path d="M376,357.5 Q391,353 404,358.5" fill="none" stroke="#5A3018" stroke-width="2.4"/>
  <path d="M340,361 Q351,358 363,362 L362,366 Q351,368 341,366 Z" fill="#D09060" opacity="0.6"/>
  <path d="M378,362 Q389,358 401,361 L400,366 Q390,368 379,366 Z" fill="#D09060" opacity="0.6"/>
  <ellipse cx="351.5" cy="365.8" rx="8" ry="3.2" fill="#fff"/>
  <ellipse cx="389.5" cy="365.8" rx="8" ry="3.2" fill="#fff"/>
  <circle cx="351" cy="365.5" r="3.2" fill="#4A2A1A"/>
  <circle cx="389" cy="365.5" r="3.2" fill="#4A2A1A"/>
  <path d="M360,389.5 Q361.5,385 366,385 L374.5,385 Q379,385 380.5,389.5 Q377,391.8 370,391.8 Q363,391.8 360,389.5 Z" fill="#C4844E"/>
  <path d="M362.5,387 Q365,384 370,384 Q375,384 378,387 Q374,388.5 370,388.5 Q366,388.5 362.5,387 Z" fill="#E8A77A"/>
  <path d="M354,400.5 Q370,398 386,400.5 Q370,403.5 354,400.5 Z" fill="#B5604A"/>
  <path d="M357,402 Q370,407 383,402 Q370,404 357,402 Z" fill="#D08A6A"/>
 </svg>
 <!-- woman -->
 <svg class="a" style="left:823px;top:305px" width="200" height="200" viewBox="823 305 200 200">
  <path d="M846,378 Q846,345 858,332 Q872,318.5 897,318.5 Q922,319 934,332 Q946,345 946,378 L946,430 Q944,446 928,447 L866,447 Q847,446 846,430 Z" fill="#482810"/>
  <path d="M873,400 L926,400 L926,447 L873,447 Z" fill="#E8A87C"/>
  <path d="M823,461 L866,446.5 L926,446.5 L969,461 L969,505 L823,505 Z" fill="#9600FC"/>
  <path d="M866,446.5 L926,446.5 L933.5,499.3 L858.2,499.3 Q861,470 866,446.5 Z" fill="#D8B8F8"/>
  <path d="M876,438 L915,438 L895.5,494 Z" fill="#EAAC80"/>
  <path d="M873,405 L930,405 L930,428 Q914,446 904,457 L889.5,457 Q879,446 873,430 Z" fill="#C8854F"/>
  <path d="M863,366 L929,366 L929,412 Q915,431 896,431 Q877,431 863,412 Z" fill="#E8A87C"/>
  <path d="M863,367.5 Q873,369 885,368 Q900,366 913,362 L929,358 L929,350 L863,350 Z" fill="#482810"/>
  <path d="M858.2,499.3 Q868,486 885.3,481.5 Q892,487 895.5,498.5 Q899,487 907.3,481.5 Q924,486 933.5,499.3 L933.5,505 L858.2,505 Z" fill="#9600FC"/>
  <ellipse cx="879" cy="379.5" rx="8" ry="3.3" fill="#fff"/>
  <circle cx="878.5" cy="379" r="3.3" fill="#2A1408"/>
  <ellipse cx="913" cy="379.5" rx="8" ry="3.3" fill="#fff"/>
  <circle cx="913.5" cy="379" r="3.3" fill="#2A1408"/>
  <path d="M870,374 Q879,371 888,374" fill="none" stroke="#A06a40" stroke-width="1.2"/>
  <path d="M893,382 L891,399 Q896,402 901,399" fill="none" stroke="#C78A5A" stroke-width="1.1"/>
  <path d="M886,410 Q896,407 907,410 Q896,412 886,410 Z" fill="#B8624E"/>
  <path d="M887,411 Q896,417 906,411 Q896,413 887,411 Z" fill="#E2907A"/>
 </svg>
 <div class="a" style="left:951px;top:647.5px;width:55px;height:26px;background:#3B3535;border-top:2px solid #A9C2B6;border-bottom:2px solid #060A08;border-right:2px solid #060A08"></div>
 <svg class="a" style="left:965px;top:652px" width="28" height="20" viewBox="965 652 28 20"><polygon points="989,661 968,654 968,668" fill="#fff"/></svg>
 <div class="a" style="left:987px;top:167px;width:16px;height:24px;background:#2E3636;border-top:2px solid #A9C2B6"></div>

</div></div>
<!-- scrollbar -->
<div class="a" style="left:257px;top:728px;width:656px;height:17px;background:#F0F0F0"></div>
<div class="a" style="left:275px;top:729px;width:511px;height:15px;background:#CDCDCD"></div>

<!-- right panel -->
<div class="t" style="left:922px;top:103.3px;font-size:10.8px;color:#15203a">Frame Struct</div>
<div class="a" style="left:920px;top:119px;width:97px;height:626px;background:#fff"></div>

<!-- status bar -->
<div class="a" style="left:0;top:745px;width:1024px;height:21px;background:#F0F0F0"></div>
<div class="a" style="left:0;top:766px;width:1024px;height:2px;background:#2b2b2b"></div>

<!-- menu items -->
<div class="t" style="left:24px;top:29.5px;font-size:11.3px;color:#15152a"><u>F</u>ile</div>
<div class="t" style="left:57px;top:29.5px;font-size:11.3px;color:#15152a"><u>E</u>dit</div>
<div class="t" style="left:92px;top:29.5px;font-size:11.3px;color:#15152a"><u>V</u>iew</div>
<div class="t" style="left:132px;top:29.5px;font-size:11.3px;color:#15152a"><u>I</u>nsert</div>
<div class="t" style="left:175px;top:29.5px;font-size:11.3px;color:#15152a">F<u>o</u>rmat</div>
<div class="t" style="left:226px;top:29.5px;font-size:11.3px;color:#15152a"><u>T</u>ools</div>
<div class="t" style="left:268.7px;top:29.5px;font-size:11.3px;color:#15152a"><u>M</u>odule</div>
<div class="t" style="left:322.5px;top:29.5px;font-size:11.3px;color:#15152a"><u>W</u>indow</div>
<div class="t" style="left:379.5px;top:29.5px;font-size:11.3px;color:#15152a"><u>H</u>elp</div>
<!-- status texts -->
<div class="t" style="left:214px;top:751px;font-size:11px;color:#111">Slide 1 of 1</div>
<div class="t" style="left:567.5px;top:751px;font-size:11px;color:#111;letter-spacing:-0.45px">OBJ_12</div>
<div class="t" style="left:717.5px;top:751px;font-size:11px;color:#111;letter-spacing:-0.35px">129, 57</div>
<div class="t" style="left:811px;top:751px;font-size:11px;color:#111;letter-spacing:-0.2px">250 x 105</div>
<!-- tree texts -->
<div class="t" style="left:25px;top:121.5px;font-size:11px;color:#111">Course 'Test Cours</div>
<div class="t" style="left:33px;top:137.5px;font-size:11.3px;color:#111">First module</div>
<div class="t" style="left:937.5px;top:121.7px;font-size:11px;color:#111;letter-spacing:-0.5px">FRAME_5</div>
<div class="t" style="left:937.5px;top:154px;font-size:11px;color:#111">Objects</div>
<div class="t" style="left:945.3px;top:185.5px;font-size:11px;color:#111;letter-spacing:-0.45px">OBJ_10</div>
<div class="t" style="left:945.3px;top:217.5px;font-size:11px;color:#111;letter-spacing:-0.45px">OBJ_11</div>
<div class="t" style="left:945.3px;top:249.5px;font-size:11px;color:#111;letter-spacing:-0.45px">OBJ_12</div>
<div class="t" style="left:937.5px;top:282px;font-size:11px;color:#111">Groups</div>
<div class="t" style="left:945.3px;top:313.5px;font-size:11px;color:#111;letter-spacing:-0.55px">GROUP_1</div>
<div class="t" style="left:937.5px;top:345.5px;font-size:11px;color:#111">Scenarios</div>
<div class="t" style="left:945.3px;top:377.5px;font-size:11px;color:#111;letter-spacing:-0.5px">SCN_1</div>
<div class="t" style="left:945.3px;top:409.5px;font-size:11px;color:#111;letter-spacing:-0.5px">SCN_2</div>
<!-- toolbar texts -->
<div class="t" style="left:401.5px;top:54px;font-size:11px;color:#000">100%</div>
<div class="t" style="left:549px;top:54.5px;font-size:11.5px;color:#111">View Module</div>

<svg class="a" style="left:0;top:0" width="1024" height="768" viewBox="0 0 1024 768">
<defs>
 <linearGradient id="cY" x1="0" y1="0" x2="0" y2="1"><stop offset="0" stop-color="#FBE9A8"/><stop offset="1" stop-color="#E2B848"/></linearGradient>
 <linearGradient id="cDoc" x1="0" y1="0" x2="1" y2="1"><stop offset="0" stop-color="#FFFFFF"/><stop offset="1" stop-color="#C8D0DC"/></linearGradient>
</defs>
<!-- app icon -->
<rect x="2" y="3" width="16" height="16" fill="#E63A4C"/>
<rect x="2.5" y="3.5" width="15" height="15" fill="none" stroke="#B8202E" stroke-width="1"/>
<g stroke="#FFF2EE" stroke-width="1.6" stroke-linecap="round">
 <line x1="10.3" y1="5.8" x2="10.3" y2="8.6"/><line x1="10.3" y1="13.2" x2="10.3" y2="16"/>
 <line x1="6" y1="8.5" x2="8.2" y2="9.7"/><line x1="12.4" y1="12.1" x2="14.6" y2="13.3"/>
 <line x1="6" y1="13.3" x2="8.2" y2="12.1"/><line x1="12.4" y1="9.7" x2="14.6" y2="8.5"/>
</g>
<!-- window controls -->
<line x1="903" y1="10.5" x2="913" y2="10.5" stroke="#000" stroke-width="1"/>
<rect x="948.5" y="7.5" width="7" height="7" fill="none" stroke="#000" stroke-width="1"/>
<path d="M950.5,7.5 V5.5 H957.5 V12.5 H955.5" fill="none" stroke="#000" stroke-width="1"/>
<path d="M994,5 L1004,15 M1004,5 L994,15" stroke="#000" stroke-width="1.1"/>
<!-- MDI controls -->
<rect x="977" y="37" width="7" height="2" fill="#3A3A3A"/>
<rect x="992.5" y="32.5" width="6" height="5" fill="none" stroke="#3A3A3A" stroke-width="1"/>
<path d="M994.5,32.5 V30.5 H1000.5 V35.5 H998.5" fill="none" stroke="#3A3A3A" stroke-width="1"/>
<rect x="992.5" y="32.5" width="6" height="1.5" fill="#3A3A3A"/>
<rect x="994.5" y="30.5" width="6" height="1.5" fill="#3A3A3A"/>
<path d="M1010.5,31 L1017.5,38 M1017.5,31 L1010.5,38" stroke="#3A3A3A" stroke-width="1.3"/>
<!-- menu doc icon -->
<path d="M4.5,27.5 L11,27.5 L14.5,31 L14.5,42.5 L4.5,42.5 Z" fill="#F6D8D8" stroke="#D88C8C" stroke-width="1"/>
<rect x="6" y="29" width="4.5" height="4" fill="#E03A48"/>
<rect x="6" y="35" width="7" height="5" fill="#E8A8A8"/>
<!-- panel close buttons -->
<g stroke="#2E3E5A" stroke-width="1.3">
 <path d="M107.5,104.5 L114.5,111.5 M114.5,104.5 L107.5,111.5"/>
 <path d="M237.5,104.5 L244.5,111.5 M244.5,104.5 L237.5,111.5"/>
 <path d="M1009.5,104.5 L1016.5,111.5 M1016.5,104.5 L1009.5,111.5"/>
</g>
<path d="M992,106 L999,106 L995.5,110.5 Z" fill="#000"/>
<!-- thumb panel tabs -->
<path d="M126,119 L126,103 Q126,100.5 129,100.5 L164,100.5 L177.5,119 Z" fill="#fff"/>
<path d="M126.5,119 L126.5,103 Q126.5,101 129,101 L164,101" fill="none" stroke="#94A4BC" stroke-width="1"/>
<rect x="140.5" y="105.5" width="10" height="9" rx="1.5" fill="none" stroke="#000" stroke-width="1.3"/>
<line x1="143" y1="108" x2="148" y2="108" stroke="#000" stroke-width="1.2"/>
<g stroke="#000" stroke-width="1">
 <line x1="192.5" y1="105" x2="204" y2="105"/><line x1="195.5" y1="107.5" x2="204" y2="107.5"/>
 <line x1="195.5" y1="110" x2="204" y2="110"/><line x1="192.5" y1="113.5" x2="204" y2="113.5"/>
</g>
<!-- course tree icons -->
<path d="M9.5,119.5 L17,119.5 L20.5,123 L20.5,134.5 L9.5,134.5 Z" fill="#FBEAEA" stroke="#D89A9A" stroke-width="1"/>
<rect x="11.3" y="125" width="7.5" height="6.7" fill="#E0404C"/>
<path d="M17.5,136 L25,136 L28.5,139.5 L28.5,150.5 L17.5,150.5 Z" fill="#FBEAEA" stroke="#D89A9A" stroke-width="1"/>
<rect x="19" y="136.8" width="5" height="5" fill="#E0303E"/>
<rect x="19" y="143" width="8" height="5" fill="#E4B0B0"/>
<!-- frame struct icons -->
<rect x="923.5" y="123" width="11" height="8.5" fill="url(#cDoc)" stroke="#5A6A80" stroke-width="1"/>
<line x1="927" y1="126" x2="931" y2="126" stroke="#5A6A80" stroke-width="1"/>
<g id="fold">
<path d="M920.5,154.5 L925,154.5 L926.5,156.5 L935,156.5 L935,165 L920.5,165 Z" fill="url(#cY)" stroke="#8A7030" stroke-width="1"/>
<path d="M921,158.5 L934.5,158.5" stroke="#C8A040" stroke-width="0.8"/>
</g>
<use href="#fold" x="0" y="128"/>
<use href="#fold" x="8" y="160"/>
<use href="#fold" x="0" y="192"/>
<g id="obj">
<rect x="931.5" y="186.5" width="12" height="11" fill="#D8E4F2" stroke="#1E2E58" stroke-width="1"/>
<path d="M928,185 L932.8,189.5 L928,193.5 Z" fill="#2E6ED8"/>
<path d="M936,187.5 L939.3,191.3 L937.8,191.3 L940,194.3 L937.2,194.3 L937.2,197 L935,197 L935,194.3 L932.2,194.3 L934.4,191.3 L932.8,191.3 Z" fill="#30A030" stroke="#146414" stroke-width="0.6"/>
<circle cx="941" cy="190.3" r="1.6" fill="#E4D670" stroke="#7A6A20" stroke-width="0.6"/>
<path d="M938.5,195.5 H943" stroke="#1E2E58" stroke-width="1"/>
</g>
<use href="#obj" x="0" y="32"/>
<use href="#obj" x="0" y="64"/>
<use href="#obj" x="-441" y="564"/>
<rect x="959.5" y="265" width="8" height="7" fill="#F0F2F4" stroke="#8A9AAA" stroke-width="0.8"/>
<path d="M966,266 L967.3,269 L970,269 L968,271 L969,274 L966,272.3 L963,274 L964,271 L962,269 L964.7,269 Z" fill="#F8D830" stroke="#B89820" stroke-width="0.5"/>
<circle cx="977.5" cy="269" r="4" fill="#C8D8F0" stroke="#4A6AA8" stroke-width="1"/>
<path d="M977.5,266.5 V269.3 H979.5" stroke="#2A4A88" stroke-width="1" fill="none"/>
<g id="scn">
<path d="M929,377.5 H933 M930,379.5 H934 M929,381.5 H933 M930,383.5 H934 M929,385.5 H933 M930,387.5 H934" stroke="#303840" stroke-width="1"/>
<path d="M938.5,376 L943.5,376 L940,381 L943,381 L935.5,388.5 L938,382.5 L935.5,382.5 Z" fill="#F4D040" stroke="#A08020" stroke-width="0.6"/>
</g>
<use href="#scn" x="0" y="32"/>
<!-- status bar icons -->
<g fill="#000"><rect x="694" y="755" width="1" height="1"/><rect x="696" y="755" width="1" height="1"/><rect x="698" y="755" width="1" height="1"/><rect x="700" y="755" width="1" height="1"/><rect x="702" y="755" width="1" height="1"/><rect x="694" y="763" width="1" height="1"/><rect x="696" y="763" width="1" height="1"/><rect x="698" y="763" width="1" height="1"/><rect x="700" y="763" width="1" height="1"/><rect x="702" y="763" width="1" height="1"/><rect x="694" y="755" width="1" height="1"/><rect x="694" y="757" width="1" height="1"/><rect x="694" y="759" width="1" height="1"/><rect x="694" y="761" width="1" height="1"/><rect x="694" y="763" width="1" height="1"/><rect x="702" y="755" width="1" height="1"/><rect x="702" y="757" width="1" height="1"/><rect x="702" y="759" width="1" height="1"/><rect x="702" y="761" width="1" height="1"/><rect x="702" y="763" width="1" height="1"/><rect x="792" y="753" width="1" height="1"/><rect x="794" y="753" width="1" height="1"/><rect x="796" y="753" width="1" height="1"/><rect x="798" y="753" width="1" height="1"/><rect x="800" y="753" width="1" height="1"/><rect x="802" y="753" width="1" height="1"/><rect x="792" y="763" width="1" height="1"/><rect x="794" y="763" width="1" height="1"/><rect x="796" y="763" width="1" height="1"/><rect x="798" y="763" width="1" height="1"/><rect x="800" y="763" width="1" height="1"/><rect x="802" y="763" width="1" height="1"/><rect x="792" y="753" width="1" height="1"/><rect x="792" y="755" width="1" height="1"/><rect x="792" y="757" width="1" height="1"/><rect x="792" y="759" width="1" height="1"/><rect x="792" y="761" width="1" height="1"/><rect x="792" y="763" width="1" height="1"/><rect x="802" y="753" width="1" height="1"/><rect x="802" y="755" width="1" height="1"/><rect x="802" y="757" width="1" height="1"/><rect x="802" y="759" width="1" height="1"/><rect x="802" y="761" width="1" height="1"/><rect x="802" y="763" width="1" height="1"/></g>
<g stroke="#000" stroke-width="1" fill="none">
 <path d="M689,753.5 H697 M692.5,750 V757"/>
 <path d="M793,749.5 H803 M793.5,748 V751 M802.5,748 V751"/>
 <path d="M788.5,755 V764 M787,763.5 H790"/>
</g>
<rect x="0" y="745" width="1024" height="1" fill="#FAFAFA"/>
<!-- scrollbar arrows -->
<path d="M268.5,733 L265,736.5 L268.5,740" fill="none" stroke="#505050" stroke-width="1.6"/>
<path d="M904.5,733 L908,736.5 L904.5,740" fill="none" stroke="#505050" stroke-width="1.6"/>
<!-- thumb panel bottom icons -->
<g id="sq">
<rect x="131" y="734" width="6" height="6" fill="#1E2A40"/>
<rect x="130.5" y="733.5" width="5.5" height="5.5" fill="#fff" stroke="#B8C4D4" stroke-width="0.6"/>
</g>
<use href="#sq" x="14.5" y="0"/>
<use href="#sq" x="17.5" y="-2.5"/>
<use href="#sq" x="19.5" y="2.5"/>
<rect x="158.5" y="728.5" width="15" height="16" fill="#FCC8A0" stroke="#E07030" stroke-width="1.3"/>
<use href="#sq" x="31" y="-2"/>
<use href="#sq" x="33" y="2.5"/>
<!-- cursor -->
<path d="M978.5,689.5 L978.5,705.5 L982.3,702 L985.2,708 L987.4,707 L984.6,701.2 L989.6,701.2 Z" fill="#fff" stroke="#000" stroke-width="1"/>
</svg>
</body></html>
